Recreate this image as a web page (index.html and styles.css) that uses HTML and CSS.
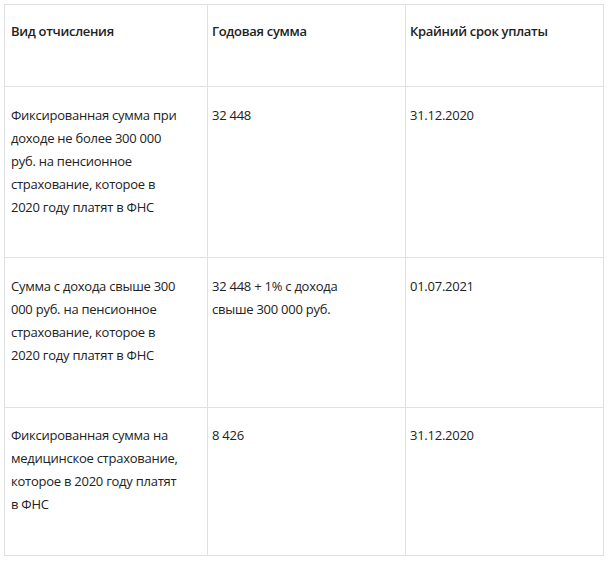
FILE: index.html
```html
<!DOCTYPE html>
<html lang="ru">
<head>
<meta charset="utf-8">
<link rel="stylesheet" href="styles.css">
</head>
<body>
<table class="tbl">
  <colgroup>
    <col class="c1"><col class="c2"><col class="c3">
  </colgroup>
  <thead>
    <tr class="head">
      <th>Вид отчисления</th>
      <th>Годовая сумма</th>
      <th>Крайний срок уплаты</th>
    </tr>
  </thead>
  <tbody>
    <tr>
      <td>Фиксированная сумма при доходе не более 300 000 руб. на пенсионное страхование, которое в 2020 году платят в ФНС</td>
      <td>32 448</td>
      <td>31.12.2020</td>
    </tr>
    <tr class="r2">
      <td>Сумма с дохода свыше 300 000 руб. на пенсионное страхование, которое в 2020 году платят в ФНС</td>
      <td>32 448 + 1% с дохода свыше 300 000 руб.</td>
      <td>01.07.2021</td>
    </tr>
    <tr>
      <td>Фиксированная сумма на медицинское страхование, которое в 2020 году платят в ФНС</td>
      <td>8 426</td>
      <td>31.12.2020</td>
    </tr>
  </tbody>
</table>
</body>
</html>
```
FILE: styles.css
```css
html, body {
  margin: 0;
  padding: 0;
  background: #ffffff;
}
body {
  padding: 4px 0 0 4px;
  font-family: "Open Sans", "Noto Sans", sans-serif;
  color: #222222;
}
.tbl {
  border-collapse: collapse;
  width: 599px;
  table-layout: fixed;
  font-size: 13px;
  line-height: 23px;
  letter-spacing: -0.25px;
}
.c1 { width: 203px; }
.c2 { width: 198px; }
.c3 { width: 198px; }
.tbl th, .tbl td {
  border: 1px solid #e0e0e0;
  vertical-align: top;
  text-align: left;
  padding: 17px 24px 38px 4px;
}
.tbl th:first-child, .tbl td:first-child {
  padding-left: 6px;
  padding-right: 25px;
}
.tbl th {
  font-weight: 600;
  letter-spacing: -0.3px;
  padding-top: 15px;
  padding-bottom: 43px;
}
.r2 td {
  padding-bottom: 40px;
}
.tbl tbody tr:last-child td {
  padding-top: 16px;
  padding-bottom: 39px;
}
```
